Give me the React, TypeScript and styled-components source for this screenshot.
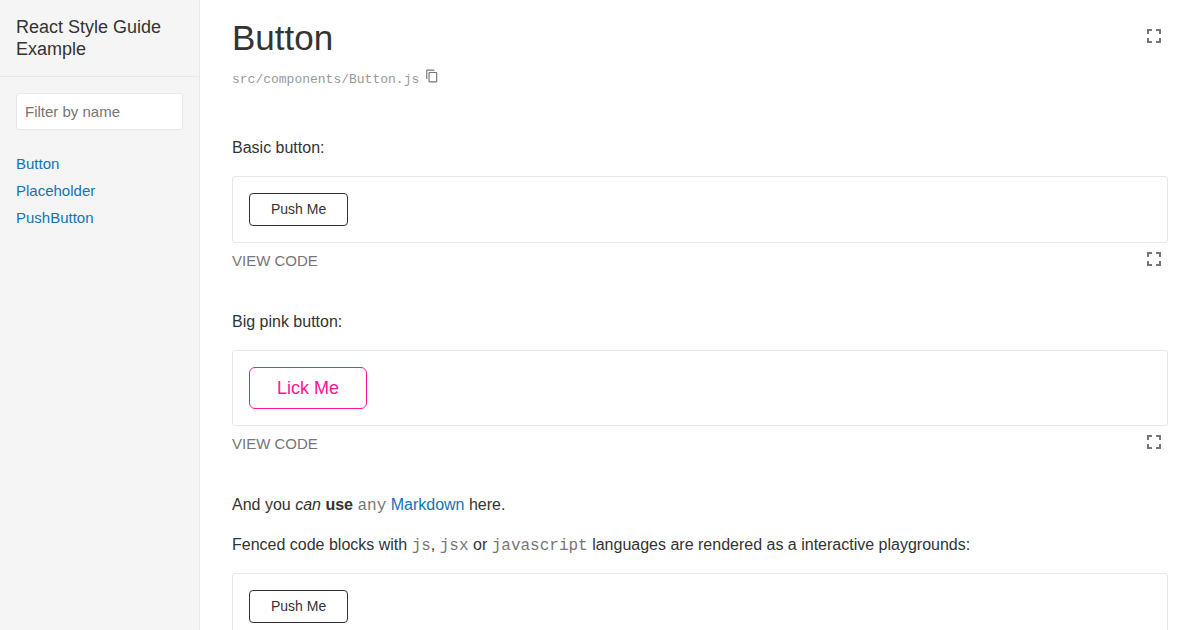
import React from "react";
import styled, { createGlobalStyle } from "styled-components";
import { MdContentCopy, MdFullscreen } from "react-icons/md";

const sans = `"Helvetica Neue", Helvetica, "Liberation Sans", Arial, sans-serif`;
const mono = `"Liberation Mono", "Courier New", monospace`;

const GlobalStyle = createGlobalStyle`
  *, *::before, *::after { box-sizing: border-box; }
  body {
    margin: 0;
    background: #fff;
    color: #333;
    font-family: ${sans};
    font-size: 16px;
    line-height: 24px;
  }
`;

const Layout = styled.div`
  display: grid;
  grid-template-columns: 200px minmax(0, 1fr);
  min-height: 100vh;
`;

const Sidebar = styled.aside`
  background: #f5f5f5;
  border-right: 1px solid #e8e8e8;
`;

const Logo = styled.div`
  padding: 16px;
  border-bottom: 1px solid #e8e8e8;
  font-size: 18px;
  line-height: 22px;
`;

const Search = styled.div`
  display: flex;
  padding: 16px;
`;

const SearchInput = styled.input`
  width: 100%;
  height: 37px;
  padding: 8px;
  border: 1px solid #e8e8e8;
  border-radius: 3px;
  background: #fff;
  color: #333;
  font-family: ${sans};
  font-size: 15px;

  &::placeholder {
    color: #767676;
  }
`;

const NavList = styled.ul`
  display: flex;
  flex-direction: column;
  gap: 4px;
  margin: 0;
  padding: 6px 16px;
  list-style: none;
  font-size: 15px;
  line-height: 23px;
`;

const Link = styled.a`
  color: #1673b1;
  text-decoration: none;

  &:hover {
    color: #e90;
  }
`;

const Content = styled.main`
  max-width: 1000px;
  padding: 16px 32px;
`;

const Header = styled.header`
  margin-bottom: 44px;
`;

const HeadingRow = styled.div`
  display: flex;
  align-items: flex-start;
  justify-content: space-between;
`;

const Toolbar = styled.div`
  padding-top: 6px;
`;

const Heading = styled.h1`
  margin: 0;
  font-size: 35px;
  font-weight: normal;
  line-height: 43px;
`;

const PathLine = styled.div`
  display: flex;
  align-items: center;
  gap: 6px;
  margin-top: 9px;
  color: #999;
  font-family: ${mono};
  font-size: 13px;
  line-height: 24px;
`;

const IconButton = styled.button<{ $pad?: number }>`
  display: flex;
  padding: ${({ $pad = 0 }) => $pad}px;
  border: 0;
  background: transparent;
  color: #767676;
  cursor: pointer;
`;

const CopyButton = styled(IconButton)`
  padding-bottom: 8px;
`;

const Paragraph = styled.p`
  margin: 0 0 16px;
`;

const Code = styled.code`
  color: #767676;
  font-family: ${mono};
  font-size: inherit;
  line-height: 1;
`;

const Playground = styled.section`
  margin-bottom: 35px;
`;

const Preview = styled.div`
  display: flex;
  padding: 16px;
  border: 1px solid #e8e8e8;
  border-radius: 3px;
`;

const Controls = styled.div`
  display: flex;
  align-items: center;
  justify-content: space-between;
  height: 32px;
`;

const CodeTab = styled.button`
  padding: 4px 0 0;
  border: 0;
  background: transparent;
  color: #767676;
  font-family: ${sans};
  font-size: 15px;
  line-height: 20px;
  text-transform: uppercase;
  cursor: pointer;
`;

const DemoButton = styled.button<{ $color: string; $large?: boolean }>`
  padding: ${({ $large }) => ($large ? "9px 27px" : "7px 21px")};
  border: 1px solid ${({ $color }) => $color};
  border-radius: ${({ $large }) => ($large ? 6 : 4)}px;
  background: #fff;
  color: ${({ $color }) => $color};
  font-family: ${sans};
  font-size: ${({ $large }) => ($large ? 18 : 14)}px;
  line-height: ${({ $large }) => ($large ? 22 : 17)}px;
  cursor: pointer;
`;

function FullscreenButton() {
  return (
    <IconButton $pad={2} type="button" aria-label="Open isolated">
      <MdFullscreen size={24} />
    </IconButton>
  );
}

function Example({ children }: { children: React.ReactNode }) {
  return (
    <Playground>
      <Preview>{children}</Preview>
      <Controls>
        <CodeTab type="button">View Code</CodeTab>
        <FullscreenButton />
      </Controls>
    </Playground>
  );
}

const components = ["Button", "Placeholder", "PushButton"];

export default function App() {
  return (
    <>
      <GlobalStyle />
      <Layout>
        <Sidebar>
          <Logo>React Style Guide Example</Logo>
          <Search>
            <SearchInput type="text" placeholder="Filter by name" aria-label="Filter by name" />
          </Search>
          <nav>
            <NavList>
              {components.map((name) => (
                <li key={name}>
                  <Link href={`#${name.toLowerCase()}`}>{name}</Link>
                </li>
              ))}
            </NavList>
          </nav>
        </Sidebar>
        <Content>
          <Header>
            <HeadingRow>
              <Heading>Button</Heading>
              <Toolbar>
                <FullscreenButton />
              </Toolbar>
            </HeadingRow>
            <PathLine>
              src/components/Button.js
              <CopyButton type="button" aria-label="Copy to clipboard">
                <MdContentCopy size={14} />
              </CopyButton>
            </PathLine>
          </Header>
          <Paragraph>Basic button:</Paragraph>
          <Example>
            <DemoButton type="button" $color="#333">Push Me</DemoButton>
          </Example>
          <Paragraph>Big pink button:</Paragraph>
          <Example>
            <DemoButton type="button" $color="#ff1493" $large>Lick Me</DemoButton>
          </Example>
          <Paragraph>
            And you <em>can</em> <strong>use</strong> <Code>any</Code>{" "}
            <Link href="#markdown">Markdown</Link> here.
          </Paragraph>
          <Paragraph>
            Fenced code blocks with <Code>js</Code>, <Code>jsx</Code> or{" "}
            <Code>javascript</Code> languages are rendered as a interactive playgrounds:
          </Paragraph>
          <Example>
            <DemoButton type="button" $color="#333">Push Me</DemoButton>
          </Example>
        </Content>
      </Layout>
    </>
  );
}
